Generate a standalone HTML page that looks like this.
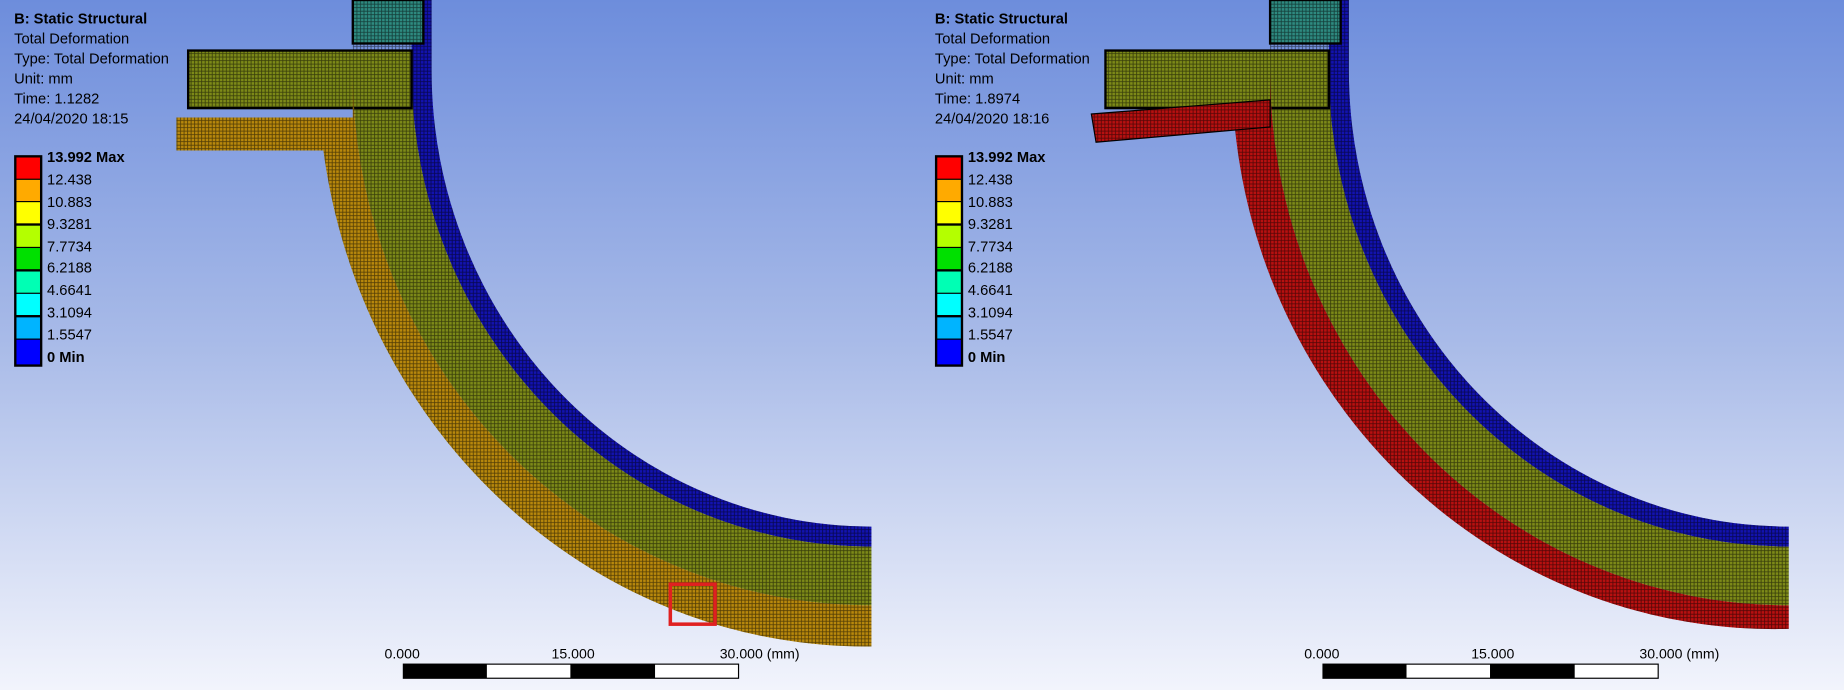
<!DOCTYPE html>
<html><head><meta charset="utf-8"><style>
html,body{margin:0;padding:0;width:1844px;height:690px;overflow:hidden}
svg{display:block}
text{font-family:"Liberation Sans",sans-serif;fill:#000}
</style></head><body>
<svg width="1844" height="690" viewBox="0 0 1568 587" preserveAspectRatio="none" xmlns="http://www.w3.org/2000/svg">
<defs>
<linearGradient id="bg" x1="0" y1="0" x2="0" y2="1">
<stop offset="0" stop-color="#6d8ddc"/><stop offset="0.5" stop-color="#a9bbe8"/><stop offset="1" stop-color="#f2f4fc"/>
</linearGradient>
<pattern id="mesh" width="3" height="3" patternUnits="userSpaceOnUse">
<path d="M0 0.5H3M0.5 0V3" stroke="#000" stroke-width="0.7" stroke-opacity="0.55" fill="none"/>
</pattern>
<g id="ring">
<path d="M367 0 L367 60 A374 388 0 0 0 741 448 L741 465 A391 405 0 0 1 350 60 L350 0Z" fill="#1212b0"/>
<path d="M350 43 L350 60 A391 405 0 0 0 741 465 L741 515 A441 455 0 0 1 300 60 L300 43Z" fill="#7d8a18"/>
<rect x="300" y="0" width="60" height="37" fill="#2e8a80" stroke="#000" stroke-width="2"/>
<rect x="160" y="43" width="190" height="49" fill="#7d8a18" stroke="#000" stroke-width="2"/>
</g>
</defs>
<rect width="1568" height="587" fill="url(#bg)"/>

<use href="#ring"/>
<path d="M300 100 L300 60 A441 455 0 0 0 741 515 L741 550 A466 490 0 0 1 275 128 L150 128 L150 100Z" fill="#b8880c"/>
<path d="M160 43H352V92H160Z M300 0H360V37H300Z M300 100 L300 60 A441 455 0 0 0 741 515 L741 550 A466 490 0 0 1 275 128 L150 128 L150 100Z M367 0 L367 60 A374 388 0 0 0 741 448 L741 515 A441 455 0 0 1 300 60 L300 0Z" fill="url(#mesh)"/>
<rect x="570" y="497" width="38" height="34" fill="none" stroke="#e02020" stroke-width="3"/>

<g transform="translate(780,0)">
<use href="#ring"/>
<path d="M300 100 L300 60 A441 455 0 0 0 741 515 L741 535 A461 475 0 0 1 270 108 L300 100Z" fill="#b81010"/>
<path d="M148 97 L300 85 L300 108 L152 121Z" fill="#b81010" stroke="#000" stroke-width="1"/>
<path d="M160 43H352V92H160Z M300 0H360V37H300Z M300 100 L300 60 A441 455 0 0 0 741 515 L741 535 A461 475 0 0 1 270 108Z M148 97 L300 85 L300 108 L152 121Z M367 0 L367 60 A374 388 0 0 0 741 448 L741 515 A441 455 0 0 1 300 60 L300 0Z" fill="url(#mesh)"/>
</g>

<g id="lg">
<text x="12" y="20" font-size="12.5" font-weight="bold">B: Static Structural</text>
<text x="12" y="37" font-size="12.5">Total Deformation</text>
<text x="12" y="54" font-size="12.5">Type: Total Deformation</text>
<text x="12" y="71" font-size="12.5">Unit: mm</text>
<g font-size="12.5">
<rect x="12" y="132" width="24" height="180" fill="#000"/>
<rect x="14" y="134" width="20" height="18" fill="#ff0000"/>
<rect x="14" y="153" width="20" height="18" fill="#ffaa00"/>
<rect x="14" y="172" width="20" height="18" fill="#ffff00"/>
<rect x="14" y="192" width="20" height="18" fill="#b4ff00"/>
<rect x="14" y="211" width="20" height="18" fill="#00e000"/>
<rect x="14" y="231" width="20" height="18" fill="#00ffb4"/>
<rect x="14" y="250" width="20" height="18" fill="#00ffff"/>
<rect x="14" y="270" width="20" height="18" fill="#00b4ff"/>
<rect x="14" y="289" width="20" height="21" fill="#0000ff"/>
<text x="40" y="138" font-weight="bold">13.992 Max</text>
<text x="40" y="157">12.438</text>
<text x="40" y="176">10.883</text>
<text x="40" y="195">9.3281</text>
<text x="40" y="214">7.7734</text>
<text x="40" y="232">6.2188</text>
<text x="40" y="251">4.6641</text>
<text x="40" y="270">3.1094</text>
<text x="40" y="289">1.5547</text>
<text x="40" y="308" font-weight="bold">0 Min</text>
</g>
</g>
<text x="12" y="88" font-size="12.5">Time: 1.1282</text>
<text x="12" y="105" font-size="12.5">24/04/2020 18:15</text>
<g transform="translate(783,0)"><use href="#lg"/>
<text x="12" y="88" font-size="12.5">Time: 1.8974</text>
<text x="12" y="105" font-size="12.5">24/04/2020 18:16</text></g>

<g id="sb">
<text x="327" y="560" font-size="12">0.000</text>
<text x="469" y="560" font-size="12">15.000</text>
<text x="612" y="560" font-size="12">30.000 (mm)</text>
<rect x="343" y="565" width="285" height="12" fill="#fff" stroke="#000" stroke-width="1"/>
<rect x="343" y="565" width="71" height="12" fill="#000"/>
<rect x="485" y="565" width="72" height="12" fill="#000"/>
</g>
<use href="#sb" transform="translate(782,0)"/>
</svg>
</body></html>
